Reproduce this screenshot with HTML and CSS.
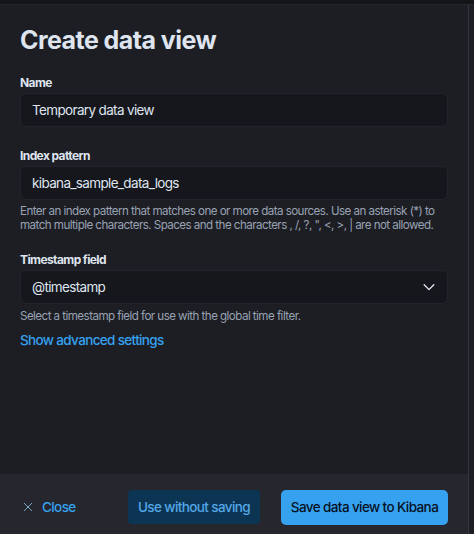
FILE: index.html
```html
<!DOCTYPE html>
<html>
<head>
<meta charset="utf-8">
<link rel="stylesheet" href="styles.css">
</head>
<body>
<div class="topbar"></div>
<div class="flyout">
  <div class="body">
    <h1 class="title">Create data view</h1>
    <div class="field first">
      <label class="label">Name</label>
      <div class="input">Temporary data view</div>
    </div>
    <div class="field">
      <label class="label">Index pattern</label>
      <div class="input">kibana_sample_data_logs</div>
      <div class="help">Enter an index pattern that matches one or more data sources. Use an asterisk (*) to match multiple characters. Spaces and the characters , /, ?, ", &lt;, &gt;, | are not allowed.</div>
    </div>
    <div class="field last">
      <label class="label">Timestamp field</label>
      <div class="input select"><span>@timestamp</span>
        <svg class="chev" width="14" height="14" viewBox="0 0 16 16"><path d="M2.5 5.5 L8 11 L13.5 5.5" fill="none" stroke="#dfe5ef" stroke-width="1.6" stroke-linecap="round" stroke-linejoin="round"/></svg>
      </div>
      <div class="help">Select a timestamp field for use with the global time filter.</div>
    </div>
    <a class="link">Show advanced settings</a>
  </div>
  <div class="footer">
    <button class="btn-empty">
      <svg width="12" height="12" viewBox="0 0 16 16"><path d="M3 3 L13 13 M13 3 L3 13" fill="none" stroke="#7fa7c7" stroke-width="1.3" stroke-linecap="round"/></svg>
      <span>Close</span>
    </button>
    <div class="spacer"></div>
    <button class="btn-secondary">Use without saving</button>
    <button class="btn-primary">Save data view to Kibana</button>
  </div>
</div>
</body>
</html>
```
FILE: styles.css
```css
* { box-sizing: border-box; }
html, body { margin: 0; padding: 0; }
body {
  width: 474px;
  height: 534px;
  background: #1d1e24;
  font-family: Inter, "Noto Sans", sans-serif;
  color: #dfe5ef;
  display: flex;
  flex-direction: column;
  overflow: hidden;
}
.topbar {
  height: 5px;
  background: #141519;
  border-bottom: 1px solid #25262e;
  flex: none;
}
.flyout {
  flex: 1;
  display: flex;
  flex-direction: column;
  border-right: 1px solid #343741;
  margin-right: 5px;
}
.body {
  flex: 1;
  padding: 19px 20px 0 20px;
  display: flex;
  flex-direction: column;
}
.title {
  margin: 0 0 19px 0;
  font-size: 25px;
  line-height: 32px;
  font-weight: 700;
  color: #dfe5ef;
  letter-spacing: -0.55px;
}
.field { display: flex; flex-direction: column; margin-bottom: 20px; }
.field.first { margin-bottom: 21px; }
.field.last { margin-bottom: 7px; }
.label {
  font-size: 12px;
  font-weight: 700;
  line-height: 16px;
  margin-bottom: 2px;
  color: #dfe5ef;
  letter-spacing: -0.6px;
}
.input {
  height: 34px;
  width: 428px;
  background: #16171c;
  border: 1px solid #23242b;
  border-radius: 6px;
  padding: 0 11px;
  display: flex;
  align-items: center;
  font-size: 13.5px;
  color: #dfe5ef;
  letter-spacing: -0.65px;
}
.select { justify-content: space-between; }
.help {
  font-size: 11.6px;
  line-height: 14px;
  color: #98a2b3;
  margin-top: 4px;
  width: 430px;
  letter-spacing: -0.55px;
}
.field.last .help { margin-top: 5px; }
.link {
  font-size: 13.5px;
  font-weight: 500;
  color: #36a2ef;
  line-height: 20px;
  letter-spacing: -0.65px;
}
.footer {
  flex: none;
  height: 60px;
  background: #25262e;
  display: flex;
  align-items: center;
  padding: 6px 20px 0 20px;
  gap: 21px;
}
.spacer { flex: 1; }
button {
  font-family: Inter, "Noto Sans", sans-serif;
  font-size: 13.5px;
  border: none;
  cursor: pointer;
  white-space: nowrap;
  letter-spacing: -0.6px;
}
.btn-empty {
  background: none;
  color: #36a2ef;
  font-weight: 500;
  display: flex;
  align-items: center;
  gap: 8px;
  padding: 0 0 0 2px;
  height: 34px;
}
.btn-secondary {
  background: #0b3552;
  color: #55a8e8;
  font-weight: 500;
  height: 34px;
  border-radius: 4px;
  padding: 0;
  width: 132px;
}
.btn-primary {
  background: #36a2ef;
  color: #07101f;
  font-weight: 500;
  height: 35px;
  border-radius: 5px;
  padding: 0;
  width: 167px;
}
```
